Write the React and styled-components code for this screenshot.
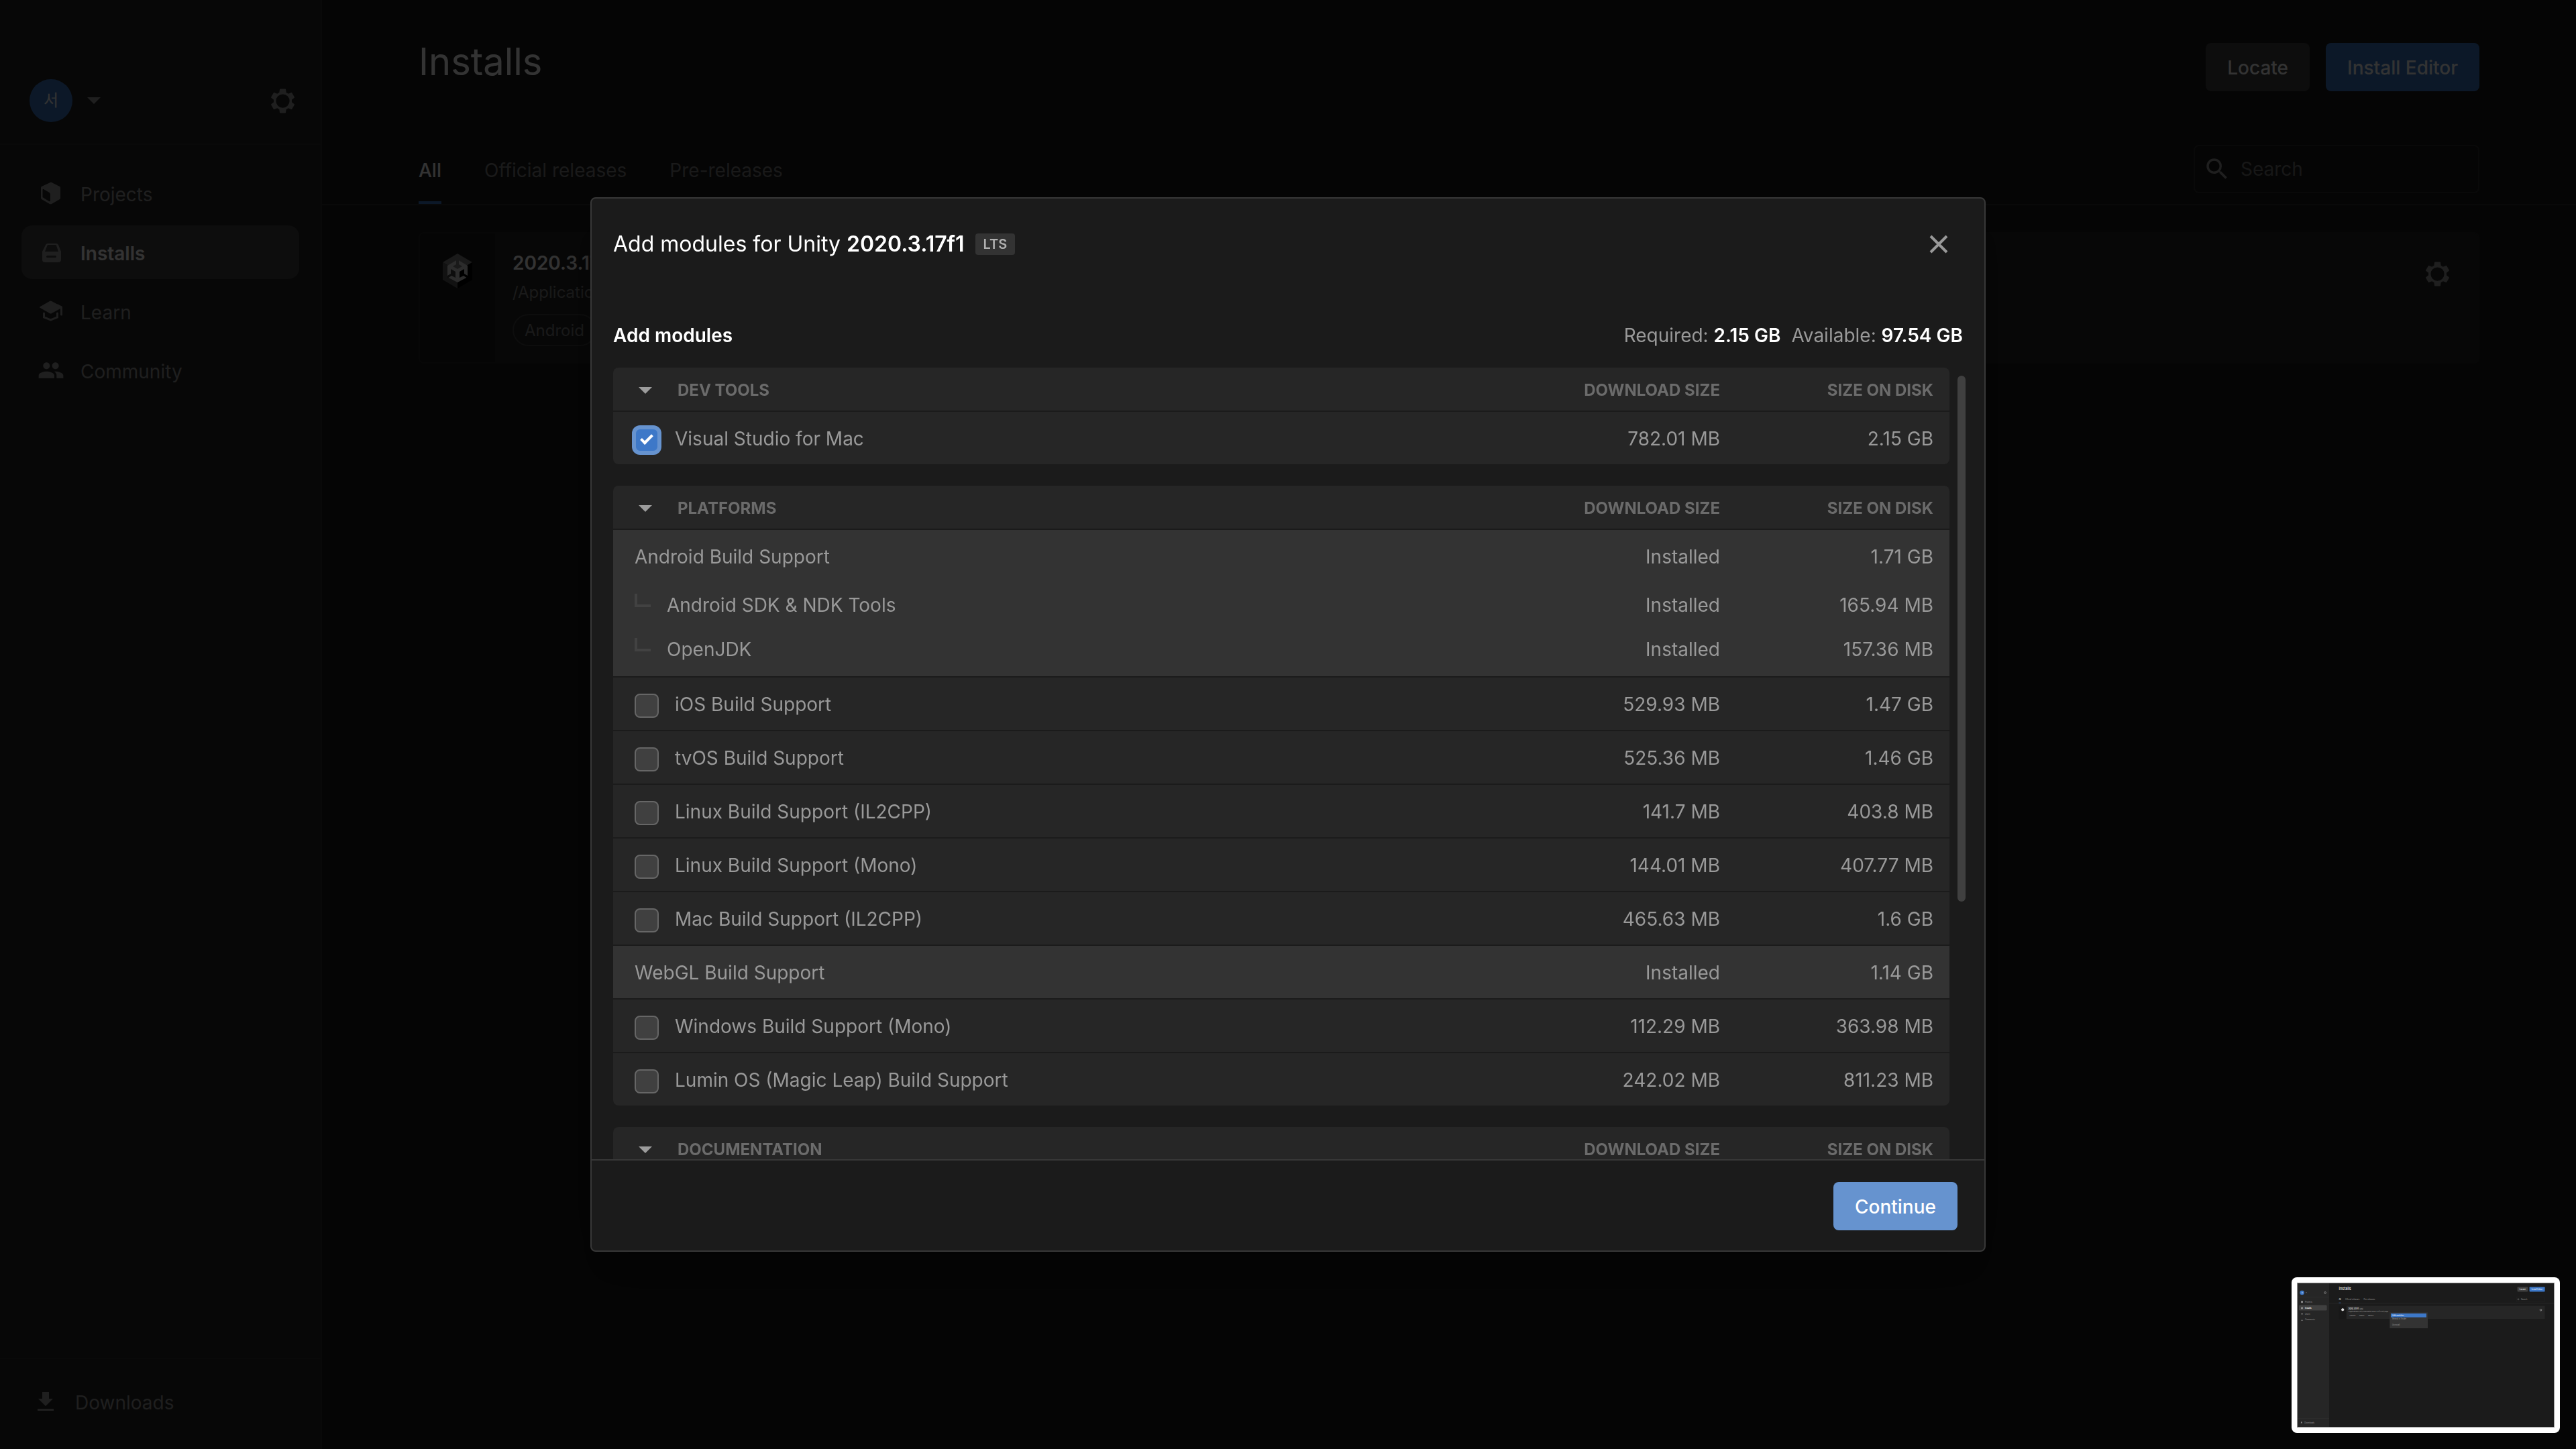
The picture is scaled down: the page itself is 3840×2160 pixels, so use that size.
import React, { useState } from 'react';
import styled, { createGlobalStyle } from 'styled-components';
import { MdPeople, MdSearch } from 'react-icons/md';

const platforms = [
  {
    name: 'Android Build Support',
    size: '1.71 GB',
    installed: true,
    children: [
      { name: 'Android SDK & NDK Tools', size: '165.94 MB' },
      { name: 'OpenJDK', size: '157.36 MB' },
    ],
  },
  { name: 'iOS Build Support', download: '529.93 MB', size: '1.47 GB' },
  { name: 'tvOS Build Support', download: '525.36 MB', size: '1.46 GB' },
  { name: 'Linux Build Support (IL2CPP)', download: '141.7 MB', size: '403.8 MB' },
  { name: 'Linux Build Support (Mono)', download: '144.01 MB', size: '407.77 MB' },
  { name: 'Mac Build Support (IL2CPP)', download: '465.63 MB', size: '1.6 GB' },
  { name: 'WebGL Build Support', size: '1.14 GB', installed: true },
  { name: 'Windows Build Support (Mono)', download: '112.29 MB', size: '363.98 MB' },
  { name: 'Lumin OS (Magic Leap) Build Support', download: '242.02 MB', size: '811.23 MB' },
];

const groups = [
  {
    title: 'DEV TOOLS',
    modules: [{ name: 'Visual Studio for Mac', download: '782.01 MB', size: '2.15 GB' }],
  },
  { title: 'PLATFORMS', modules: platforms },
  { title: 'DOCUMENTATION', modules: [] },
];

const GearIcon = () => (
  <svg width="45" height="45" viewBox="0 0 24 24" aria-hidden="true">
    <path
      fill="currentColor"
      fillRule="evenodd"
      d="M19.14 12.94c.04-.3.06-.61.06-.94 0-.32-.02-.64-.07-.94l2.03-1.58c.18-.14.23-.41.12-.61l-1.92-3.32c-.12-.22-.37-.29-.59-.22l-2.39.96c-.5-.38-1.03-.7-1.62-.94L14.4 2.81c-.04-.24-.24-.41-.48-.41h-3.84c-.24 0-.43.17-.47.41L9.25 5.35C8.66 5.59 8.12 5.92 7.63 6.29L5.24 5.33c-.22-.08-.47 0-.59.22L2.74 8.87c-.12.21-.08.47.12.61l2.03 1.58c-.05.3-.09.63-.09.94s.02.64.07.94l-2.03 1.58c-.18.14-.23.41-.12.61l1.92 3.32c.12.22.37.29.59.22l2.39-.96c.5.38 1.03.7 1.62.94l.36 2.54c.05.24.24.41.48.41h3.84c.24 0 .44-.17.47-.41l.36-2.54c.59-.24 1.13-.56 1.62-.94l2.39.96c.22.08.47 0 .59-.22l1.92-3.32c.12-.22.07-.47-.12-.61ZM12 6.6a5.4 5.4 0 0 1 0 10.8a5.4 5.4 0 0 1 0-10.8Z"
    />
  </svg>
);

const CubeIcon = () => (
  <svg width="40" height="40" viewBox="0 0 40 40" aria-hidden="true">
    <path
      fill="currentColor"
      fillRule="evenodd"
      d="M19 4Q19.500 3 21 4L33 10Q34 11 34 12V27Q34 29 33 29L21 36Q19.500 36.500 18 36L6 29Q5 28 5 27V12Q5 11 6 10ZM9 14Q7.500 13.500 7.500 15V26L17 32Q19 33 19 31V22Q19 20 17.500 19Z"
    />
  </svg>
);

const DriveIcon = () => (
  <svg width="40" height="40" viewBox="0 0 40 40" aria-hidden="true">
    <path
      fill="currentColor"
      fillRule="evenodd"
      d="M15 7H28Q30 7 31 9L35 19V31Q35 35 31 35H11Q7 35 7 31V19L12 9Q13 7 15 7ZM16 9Q15 9 14.500 10L11 19H31L28 10Q27.500 9 27 9ZM14.500 25A1.500 1.500 0 0 0 14.500 28H26.500A1.500 1.500 0 0 0 26.500 25Z"
    />
  </svg>
);

const LearnIcon = () => (
  <svg width="40" height="40" viewBox="0 0 40 40" aria-hidden="true">
    <path fill="currentColor" d="M18 5Q19.500 4 21 5L36 13V15L21 23Q19.500 24 18 23L4 15Q2 14 4 13Z" />
    <path
      fill="none"
      stroke="currentColor"
      strokeWidth="3"
      strokeLinecap="round"
      d="M30 11 35.500 14V25M9.500 23V29L19.500 33 29.500 29V23"
    />
  </svg>
);

const DownloadIcon = () => (
  <svg width="24" height="28" viewBox="0 0 24 28" aria-hidden="true">
    <path fill="currentColor" d="M7 0H17V10H23L12 21 1 10H7ZM0 25H24V28H0Z" />
  </svg>
);

const Caret = ({ color }) => (
  <svg width="20" height="10" viewBox="0 0 20 10" aria-hidden="true">
    <path fill={color} d="M0 0H20L10 10Z" />
  </svg>
);

const UnityIcon = () => (
  <svg width="44" height="52" viewBox="0 0 44 52" aria-hidden="true">
    <path fill="#808080" d="M22 0 44 13 22 26 0 13Z" />
    <path fill="#595959" d="M0 13 22 26V52L0 39Z" />
    <path fill="#000" d="M44 13 22 26V52L44 39Z" />
    <path fill="#d9d9d9" d="M22 9 37 18V35L22 43 7 35V18Z" />
    <path fill="#808080" d="M20 8H24V16L29 19 22 23 15 19 20 16Z" />
    <path fill="#404040" d="M12 23 19 27V36L13 33 7 37V33L12 30Z" />
    <path fill="#000" d="M32 23 25 27V36L31 33 37 37V33L32 30Z" />
  </svg>
);

const Preview = () => (
  <svg width="384" height="216" viewBox="0 0 3840 2160" fontFamily="Inter, sans-serif" fontSize="28" fill="#999">
    <rect width="3840" height="2160" fill="#1b1b1b" />
    <rect width="480" height="2160" fill="#262626" />
    <path d="M0 215H480M480 305H3840M0 2023H480" stroke="#303030" strokeWidth="6" />
    <circle cx="76" cy="150" r="32" fill="#3d78c8" />
    <text x="64" y="160" fill="#fff" fontFamily="Inter, 'Noto Sans CJK KR', sans-serif">서</text>
    <path d="M130 146H150L140 156Z" />
    <circle cx="421" cy="150" r="14" fill="none" stroke="#999" strokeWidth="7" />
    <rect x="30" y="336" width="416" height="80" rx="14" fill="#404040" />
    <path d="M75 270 90 278V296L75 304 61 296V278ZM64 366H88V392H61ZM60 468 76 458 92 468 76 478ZM58 564Q75 545 93 564Z" />
    <text x="120" y="300">Projects</text>
    <text x="120" y="388" fill="#fff" fontWeight="600">Installs</text>
    <text x="120" y="476">Learn</text>
    <text x="120" y="564">Community</text>
    <path d="M62 2073H74V2085H80L68 2095 56 2085H62ZM56 2098H80V2101H56Z" />
    <text x="113" y="2100">Downloads</text>
    <text x="624" y="112" fill="#fff" fontSize="56">Installs</text>
    <rect x="3286" y="64" width="156" height="72" rx="8" fill="#404040" />
    <rect x="3466" y="64" width="230" height="72" rx="8" fill="#3d78c8" />
    <text x="3318" y="110" fill="#fff">Locate</text>
    <text x="3498" y="110" fill="#fff">Install Editor</text>
    <text x="624" y="264" fill="#fff">All</text>
    <text x="720" y="264">Official releases</text>
    <text x="995" y="264">Pre-releases</text>
    <rect x="624" y="298" width="32" height="6" fill="#3d78c8" />
    <rect x="3272" y="218" width="424" height="68" fill="none" stroke="#262626" strokeWidth="4" />
    <circle cx="3300" cy="248" r="10" fill="none" stroke="#999" strokeWidth="4" />
    <text x="3340" y="262">Search</text>
    <rect x="624" y="346" width="3072" height="196" fill="#181818" />
    <rect x="738" y="346" width="2958" height="196" fill="#262626" />
    <path fill="#ddd" d="M682 380 702 392V412L682 426 662 412V392Z" />
    <text x="765" y="402" fill="#fff" fontWeight="600">2020.3.17f1</text>
    <rect x="932" y="378" width="58" height="30" fill="#404040" />
    <text x="942" y="400" fontSize="20">LTS</text>
    <text x="765" y="444" fontSize="24">/Applications/Unity/Hub/Editor/2020.3.17f1/Unity.app</text>
    <text x="783" y="502" fontSize="24">Android</text>
    <text x="927" y="502" fontSize="24">WebGL</text>
    <text x="1060" y="502" fontSize="24">macOS</text>
    <circle cx="3635" cy="408" r="13" fill="none" stroke="#aaa" strokeWidth="7" />
    <rect x="1383" y="443" width="567" height="237" fill="#333" />
    <rect x="1400" y="460" width="530" height="57" fill="#3d78c8" />
    <text x="1420" y="498" fill="#fff">Add modules</text>
    <text x="1420" y="554">Reveal in Finder</text>
    <text x="1420" y="644">Uninstall</text>
  </svg>
);

const ModuleRow = ({ item, checked, onToggle }) => {
  const id = item.name.replace(/[^a-zA-Z]+/g, '-').toLowerCase();
  return (
    <>
      <Row $installed={item.installed}>
        <Cell>
          {item.installed ? item.name : (
            <Option htmlFor={id}>
              <Checkbox id={id} type="checkbox" checked={checked} onChange={onToggle} />
              {item.name}
            </Option>
          )}
        </Cell>
        <Cell $right>{item.installed ? 'Installed' : item.download}</Cell>
        <Cell $right>{item.size}</Cell>
      </Row>
      {(item.children || []).map((child, i) => (
        <SubRow key={child.name} $last={i === item.children.length - 1}>
          <Cell>
            <SubName>
              <Branch />
              {child.name}
            </SubName>
          </Cell>
          <Cell $right>Installed</Cell>
          <Cell $right>{child.size}</Cell>
        </SubRow>
      ))}
    </>
  );
};

const App = () => {
  const [selected, setSelected] = useState(['Visual Studio for Mac']);

  const toggle = (name) => setSelected((prev) => (
    prev.includes(name) ? prev.filter((n) => n !== name) : [...prev, name]
  ));

  return (
    <>
      <GlobalStyle />
      <Page>
        <Sidebar>
          <Account>
            <AccountButton aria-label="Account">
              <Avatar>서</Avatar>
              <Caret color="#999" />
            </AccountButton>
            <IconButton aria-label="Preferences"><GearIcon /></IconButton>
          </Account>
          <Nav>
            <NavLink href="#projects">
              <CubeIcon />
              <span>Projects</span>
            </NavLink>
            <NavLink href="#installs" $active>
              <DriveIcon />
              <span>Installs</span>
            </NavLink>
            <NavLink href="#learn">
              <LearnIcon />
              <span>Learn</span>
            </NavLink>
            <NavLink href="#community">
              <MdPeople size={40} />
              <span>Community</span>
            </NavLink>
          </Nav>
          <Downloads href="#downloads">
            <DownloadIcon />
            <span>Downloads</span>
          </Downloads>
        </Sidebar>
        <Main>
          <TopBar>
            <PageTitle>Installs</PageTitle>
            <Actions>
              <Button>Locate</Button>
              <Button $color="#3d78c8">Install Editor</Button>
            </Actions>
          </TopBar>
          <TabBar>
            <Tabs>
              <Tab $active>All</Tab>
              <Tab>Official releases</Tab>
              <Tab>Pre-releases</Tab>
            </Tabs>
            <Search>
              <MdSearch size={42} />
              <SearchInput type="text" placeholder="Search" aria-label="Search" />
            </Search>
          </TabBar>
          <Card>
            <CardIcon><UnityIcon /></CardIcon>
            <CardBody>
              <Version>
                2020.3.17f1
                <Badge>LTS</Badge>
              </Version>
              <Path>/Applications/Unity/Hub/Editor/2020.3.17f1/Unity.app</Path>
              <Chips>
                <Chip>Android</Chip>
              </Chips>
            </CardBody>
            <CardAction>
              <IconButton aria-label="Install settings"><GearIcon /></IconButton>
            </CardAction>
          </Card>
        </Main>
      </Page>

      <Backdrop>
        <Modal role="dialog" aria-modal="true" aria-labelledby="modal-title">
          <ModalHeader>
            <ModalTitle id="modal-title">
              <span>
                Add modules for Unity
                {' '}
                <strong>2020.3.17f1</strong>
              </span>
              <Badge>LTS</Badge>
            </ModalTitle>
            <IconButton aria-label="Close">
              <svg width="28" height="28" viewBox="0 0 28 28" aria-hidden="true">
                <path d="M2 2 26 26M26 2 2 26" stroke="currentColor" strokeWidth="4" />
              </svg>
            </IconButton>
          </ModalHeader>
          <Summary>
            <SummaryTitle>Add modules</SummaryTitle>
            <Space>
              <span>
                Required:
                {' '}
                <strong>2.15 GB</strong>
              </span>
              <span>
                Available:
                {' '}
                <strong>97.54 GB</strong>
              </span>
            </Space>
          </Summary>
          <ScrollArea>
            <Groups>
              {groups.map((group) => (
                <Group key={group.title}>
                  <Table>
                    <thead>
                      <tr>
                        <HeadCell>
                          <GroupToggle>
                            <Caret color="#9c9c9c" />
                            {group.title}
                          </GroupToggle>
                        </HeadCell>
                        <HeadCell $width="342px" $right>DOWNLOAD SIZE</HeadCell>
                        <HeadCell $width="318px" $right>SIZE ON DISK</HeadCell>
                      </tr>
                    </thead>
                    <tbody>
                      {group.modules.map((item) => (
                        <ModuleRow
                          key={item.name}
                          item={item}
                          checked={selected.includes(item.name)}
                          onToggle={() => toggle(item.name)}
                        />
                      ))}
                    </tbody>
                  </Table>
                </Group>
              ))}
            </Groups>
            <Thumb />
          </ScrollArea>
          <ModalFooter>
            <Button $color="#6693cf">Continue</Button>
          </ModalFooter>
        </Modal>
      </Backdrop>

      <PreviewFrame><Preview /></PreviewFrame>
    </>
  );
};

export default App;

const GlobalStyle = createGlobalStyle`
  * {
    box-sizing: border-box;
  }
  body {
    margin: 0;
    background: #1b1b1b;
    color: #999;
    font-family: Inter, 'Noto Sans CJK KR', sans-serif;
    font-size: 28px;
    line-height: 40px;
  }
  button, input {
    font: inherit;
    color: inherit;
  }
  strong {
    font-weight: 600;
    color: #fff;
  }
`;

const Page = styled.div`
  display: flex;
  min-height: 100vh;
`;

const Sidebar = styled.aside`
  display: flex;
  flex-direction: column;
  flex: none;
  width: 480px;
  background: #262626;
  border-right: 2px solid #303030;
`;

const Account = styled.div`
  display: flex;
  align-items: center;
  justify-content: space-between;
  padding: 118px 34px 32px 44px;
  border-bottom: 2px solid #303030;
`;

const IconButton = styled.button`
  display: flex;
  padding: 0;
  border: 0;
  background: none;
  color: #999;
`;

const AccountButton = styled(IconButton)`
  align-items: center;
  gap: 22px;
`;

const Avatar = styled.span`
  display: flex;
  align-items: center;
  justify-content: center;
  width: 64px;
  height: 64px;
  border-radius: 50%;
  background: #3d78c8;
  color: #fff;
  font-size: 24px;
`;

const Nav = styled.nav`
  display: flex;
  flex-direction: column;
  flex: 1;
  gap: 8px;
  padding: 32px;
`;

const NavLink = styled.a`
  display: flex;
  align-items: center;
  gap: 24px;
  height: 80px;
  padding: 0 24px;
  border-radius: 16px;
  background: ${({ $active }) => ($active ? '#404040' : 'transparent')};
  color: ${({ $active }) => ($active ? '#fff' : '#999')};
  font-weight: ${({ $active }) => ($active ? 600 : 400)};
  text-decoration: none;
  svg {
    color: #999;
  }
  span {
    padding-top: 4px;
  }
`;

const Downloads = styled.a`
  display: flex;
  align-items: center;
  gap: 32px;
  height: 136px;
  padding: 0 56px 8px;
  border-top: 2px solid #303030;
  color: #999;
  text-decoration: none;
  span {
    padding-top: 4px;
  }
`;

const Main = styled.main`
  flex: 1;
  min-width: 0;
`;

const TopBar = styled.header`
  display: flex;
  align-items: flex-start;
  justify-content: space-between;
  padding: 56px 144px 0;
  height: 216px;
`;

const PageTitle = styled.h1`
  margin: 0;
  font-size: 56px;
  line-height: 72px;
  font-weight: 400;
  color: #fff;
`;

const Actions = styled.div`
  display: flex;
  gap: 24px;
  padding-top: 8px;
`;

const Button = styled.button`
  height: 72px;
  padding: 2px 32px 0;
  border: 0;
  border-radius: 8px;
  background: ${({ $color }) => $color || '#404040'};
  color: #fff;
  font-weight: 500;
`;

const TabBar = styled.div`
  display: flex;
  justify-content: space-between;
  padding: 0 144px;
  border-bottom: 2px solid #303030;
`;

const Tabs = styled.div`
  display: flex;
  gap: 64px;
`;

const Tab = styled.button`
  height: 88px;
  padding: 8px 0 16px;
  border: 0;
  border-bottom: 4px solid ${({ $active }) => ($active ? '#3d78c8' : 'transparent')};
  background: none;
  color: ${({ $active }) => ($active ? '#fff' : '#808080')};
  font-weight: ${({ $active }) => ($active ? 500 : 400)};
`;

const Search = styled.div`
  display: flex;
  align-items: center;
  gap: 14px;
  width: 426px;
  height: 72px;
  padding: 0 12px;
  border: 2px solid #303030;
  border-radius: 8px;
`;

const SearchInput = styled.input`
  flex: 1;
  min-width: 0;
  padding: 0;
  border: 0;
  background: none;
  &::placeholder {
    color: #737373;
  }
`;

const Card = styled.section`
  display: flex;
  height: 196px;
  margin: 40px 144px 0;
  border: 2px solid #262626;
  border-radius: 8px;
  overflow: hidden;
`;

const CardIcon = styled.div`
  width: 112px;
  padding: 30px 34px;
`;

const CardBody = styled.div`
  display: flex;
  flex-direction: column;
  flex: 1;
  padding: 24px 26px;
  background: #262626;
`;

const Version = styled.div`
  display: flex;
  align-items: center;
  gap: 16px;
  color: #fff;
  font-weight: 600;
`;

const Badge = styled.span`
  height: 32px;
  padding: 0 12px;
  border-radius: 4px;
  background: #333;
  color: #b0b0b0;
  font-size: 20px;
  line-height: 32px;
  font-weight: 600;
`;

const Path = styled.div`
  padding-top: 4px;
  font-size: 24px;
  color: #808080;
`;

const Chips = styled.div`
  display: flex;
  gap: 12px;
  padding-top: 12px;
`;

const Chip = styled.span`
  padding: 2px 16px 0;
  border: 2px solid #404040;
  border-radius: 24px;
  font-size: 24px;
  line-height: 42px;
  color: #808080;
`;

const CardAction = styled.div`
  padding: 38px;
  background: #262626;
`;

const Backdrop = styled.div`
  position: fixed;
  inset: 0;
  display: flex;
  align-items: center;
  justify-content: center;
  background: rgba(0, 0, 0, 0.8);
`;

const Modal = styled.div`
  display: flex;
  flex-direction: column;
  width: 100%;
  max-width: 2080px;
  max-height: calc(100vh - 588px);
  border: 2px solid #383838;
  border-radius: 8px;
  background: #1b1b1b;
  box-shadow: 0 22px 30px -14px rgba(0, 0, 0, 0.2), 0 48px 76px 6px rgba(0, 0, 0, 0.14),
    0 18px 92px 16px rgba(0, 0, 0, 0.12);
  overflow: hidden;
`;

const ModalHeader = styled.header`
  display: flex;
  align-items: center;
  justify-content: space-between;
  flex: none;
  padding: 48px 54px 48px 32px;
`;

const ModalTitle = styled.h2`
  display: flex;
  align-items: center;
  gap: 16px;
  margin: 0;
  color: #fff;
  font-size: 32px;
  font-weight: 400;
`;

const Summary = styled.div`
  display: flex;
  justify-content: space-between;
  flex: none;
  padding: 48px 32px 28px;
`;

const SummaryTitle = styled.h3`
  margin: 0;
  color: #fff;
  font-size: 28px;
  font-weight: 600;
`;

const Space = styled.div`
  display: flex;
  gap: 16px;
`;

const ScrollArea = styled.div`
  display: flex;
  flex: 0 1 auto;
  gap: 12px;
  min-height: 0;
  padding: 0 28px 0 32px;
  overflow: hidden;
`;

const Groups = styled.div`
  display: flex;
  flex-direction: column;
  flex: 1;
  gap: 32px;
  padding-bottom: 32px;
`;

const Group = styled.section`
  flex: none;
  border-radius: 8px;
  background: #262626;
  overflow: hidden;
`;

const Thumb = styled.div`
  width: 12px;
  height: 784px;
  margin-top: 12px;
  border-radius: 6px;
  background: #404040;
`;

const Table = styled.table`
  width: 100%;
  table-layout: fixed;
  border-spacing: 0;
`;

const HeadCell = styled.th`
  width: ${({ $width }) => $width || 'auto'};
  height: 64px;
  padding: 4px 24px 0 32px;
  color: #6b6b6b;
  font-size: 24px;
  line-height: 32px;
  font-weight: 700;
  text-align: ${({ $right }) => ($right ? 'right' : 'left')};
`;

const GroupToggle = styled.button`
  display: flex;
  align-items: center;
  gap: 38px;
  padding: 0 6px;
  border: 0;
  background: none;
`;

const Cell = styled.td`
  padding: 2px 24px 0 32px;
  text-align: ${({ $right }) => ($right ? 'right' : 'left')};
`;

const Row = styled.tr`
  height: 80px;
  background: ${({ $installed }) => ($installed ? '#333' : 'transparent')};
  ${Cell} {
    border-top: 2px solid #1b1b1b;
  }
`;

const SubRow = styled.tr`
  height: ${({ $last }) => ($last ? '74px' : '66px')};
  background: #333;
  ${Cell} {
    padding-bottom: ${({ $last }) => ($last ? '8px' : '0')};
  }
`;

const SubName = styled.div`
  display: flex;
  align-items: center;
  gap: 24px;
`;

const Branch = styled.span`
  width: 24px;
  height: 20px;
  margin-bottom: 14px;
  border-left: 4px solid #424242;
  border-bottom: 4px solid #424242;
`;

const Option = styled.label`
  display: flex;
  align-items: center;
  gap: 24px;
`;

const Checkbox = styled.input`
  appearance: none;
  display: flex;
  align-items: center;
  justify-content: center;
  width: 36px;
  height: 36px;
  margin: 4px 0 0;
  border: 2px solid #666;
  border-radius: 8px;
  background: #404040;
  &:checked {
    border-color: #6693cf;
    background: #3d78c8;
    box-shadow: 0 0 0 4px #6693cf;
  }
  &:checked::after {
    content: '';
    width: 6px;
    height: 14px;
    margin-bottom: 6px;
    border: solid #fff;
    border-width: 0 4px 4px 0;
    transform: rotate(45deg);
  }
`;

const ModalFooter = styled.footer`
  display: flex;
  justify-content: flex-end;
  flex: none;
  padding: 32px 40px 30px;
  border-top: 2px solid #383838;
`;

const PreviewFrame = styled.div`
  position: fixed;
  right: 24px;
  bottom: 24px;
  padding: 8px;
  border-radius: 8px;
  background: #fff;
  svg {
    display: block;
    outline: 1px solid #999;
    outline-offset: -1px;
  }
`;
